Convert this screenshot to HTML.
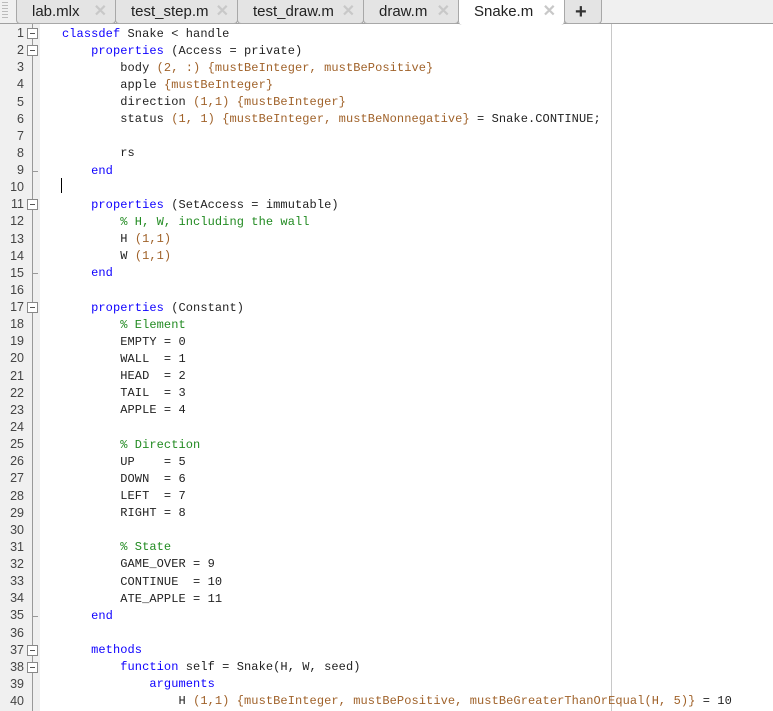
<!DOCTYPE html>
<html><head><meta charset="utf-8"><style>
*{margin:0;padding:0;box-sizing:border-box}
body{width:773px;height:711px;overflow:hidden;background:#fff;font-family:"Liberation Sans",sans-serif;position:relative}
#tabs{position:absolute;left:0;top:0;width:773px;height:24px;background:#f0f0f0;border-bottom:1px solid #a0a0a0}
.grip{position:absolute;left:2px;top:2px;width:6px;height:18px;background:repeating-linear-gradient(#bbb 0 1px,transparent 1px 3px)}
.tab{position:absolute;top:0;height:24px;background:#e4e4e4;border:1px solid #a8a8a8;border-top:none;border-radius:0 0 4px 4px;font-size:15px;color:#222;padding-left:15px;line-height:24px}
.tab .x{position:absolute;right:8px;top:0;color:#c8c8c8;font-size:16px;font-weight:bold}
.tab.act{background:#fff;border-bottom:none;height:25px}
#gut{position:absolute;left:0;top:24px;width:40px;height:687px;background:#f0f0f0}
#fold{position:absolute;left:32px;top:24px;width:1px;height:687px;background:#999}
.box{position:absolute;left:27px;width:11px;height:11px;border:1px solid #888;background:#fff}
.box:after{content:"";position:absolute;left:2px;top:4px;width:5px;height:1px;background:#555}
.tk{position:absolute;left:32px;width:6px;height:1px;background:#999}
#margin{position:absolute;left:611px;top:24px;width:1px;height:687px;background:#c8c8c8}
.ln{position:absolute;left:0;width:24px;text-align:right;font:12.5px "Liberation Sans",sans-serif;color:#444}
pre{position:absolute;left:62px;top:25.5px;font:12px/17.13px "Liberation Mono",monospace;color:#222;letter-spacing:0.08px}
.k{color:#0e00ff}.s{color:#a0622a}.c{color:#228b22}
#caret{position:absolute;left:61px;top:178px;width:1px;height:15px;background:#000}
</style></head><body>
<div id="tabs"><div class="grip"></div>
<div class="tab" style="left:16px;width:100px">lab.mlx<span class="x">✕</span></div>
<div class="tab" style="left:115px;width:123px">test_step.m<span class="x">✕</span></div>
<div class="tab" style="left:237px;width:127px">test_draw.m<span class="x">✕</span></div>
<div class="tab" style="left:363px;width:96px">draw.m<span class="x">✕</span></div>
<div class="tab act" style="left:458px;width:107px">Snake.m<span class="x">✕</span></div>
<div class="tab" style="left:564px;width:38px;padding-left:10px;font-size:20px;font-weight:bold;color:#333">+</div>
</div>
<div id="gut"></div><div id="fold"></div><div id="margin"></div>
<div id="nums"></div>
<pre><span class="k">classdef</span> Snake &lt; handle
    <span class="k">properties</span> (Access = private)
        body <span class="s">(2, :) {mustBeInteger, mustBePositive}</span>
        apple <span class="s">{mustBeInteger}</span>
        direction <span class="s">(1,1) {mustBeInteger}</span>
        status <span class="s">(1, 1) {mustBeInteger, mustBeNonnegative}</span> = Snake.CONTINUE;

        rs
    <span class="k">end</span>

    <span class="k">properties</span> (SetAccess = immutable)
        <span class="c">% H, W, including the wall</span>
        H <span class="s">(1,1)</span>
        W <span class="s">(1,1)</span>
    <span class="k">end</span>

    <span class="k">properties</span> (Constant)
        <span class="c">% Element</span>
        EMPTY = 0
        WALL  = 1
        HEAD  = 2
        TAIL  = 3
        APPLE = 4

        <span class="c">% Direction</span>
        UP    = 5
        DOWN  = 6
        LEFT  = 7
        RIGHT = 8

        <span class="c">% State</span>
        GAME_OVER = 9
        CONTINUE  = 10
        ATE_APPLE = 11
    <span class="k">end</span>

    <span class="k">methods</span>
        <span class="k">function</span> self = Snake(H, W, seed)
            <span class="k">arguments</span>
                H <span class="s">(1,1) {mustBeInteger, mustBePositive, mustBeGreaterThanOrEqual(H, 5)}</span> = 10</pre>
<div id="caret"></div>
<script>
var h='';
for(var i=1;i<=40;i++){var y=24.5+(i-1)*17.13;h+='<div class="ln" style="top:'+(y+1.5)+'px">'+i+'</div>';}
[1,2,11,17,37,38].forEach(function(n){var y=24.5+(n-1)*17.13+3.5;h+='<div class="box" style="top:'+y+'px"></div>';});
[9,15,35].forEach(function(n){var y=24.5+(n-1)*17.13+9;h+='<div class="tk" style="top:'+y+'px"></div>';});
document.getElementById('nums').innerHTML=h;
</script>
</body></html>
